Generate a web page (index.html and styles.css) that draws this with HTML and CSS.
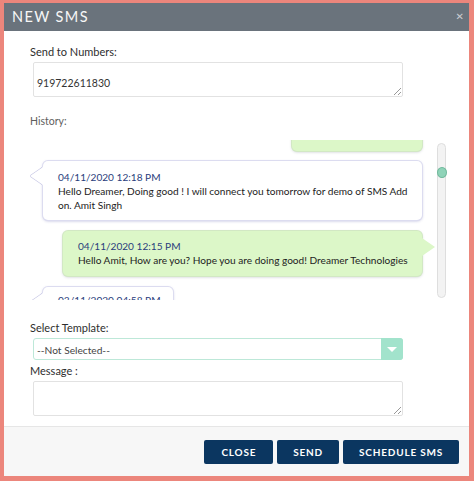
FILE: index.html
```html
<!DOCTYPE html>
<html>
<head>
<meta charset="utf-8">
<link rel="stylesheet" href="styles.css">
</head>
<body>
<div class="dialog">
  <div class="header">
    <span class="title">NEW SMS</span>
    <span class="close-x">&#x2715;</span>
  </div>
  <div class="body">
    <div class="label">Send to Numbers:</div>
    <div class="textarea numbers">919722611830<span class="grip"></span></div>
    <div class="label small">History:</div>
    <div class="history">
      <div class="messages">
        <div class="bubble sent partial-top"></div>
        <div class="bubble recv">
          <div class="ts">04/11/2020 12:18 PM</div>
          <div>Hello Dreamer, Doing good ! I will connect you tomorrow for demo of SMS Add on. Amit Singh</div>
        </div>
        <div class="bubble sent">
          <div class="ts">04/11/2020 12:15 PM</div>
          <div>Hello Amit, How are you? Hope you are doing good! Dreamer Technologies</div>
        </div>
        <div class="bubble recv short">
          <div class="ts">03/11/2020 04:58 PM</div>
        </div>
      </div>
      <div class="scrollbar"><div class="thumb"></div></div>
    </div>
    <div class="label tpl">Select Template:</div>
    <div class="select">
      <span class="select-text">--Not Selected--</span>
      <span class="select-btn"><span class="tri"></span></span>
    </div>
    <div class="label msg">Message :</div>
    <div class="textarea message"><span class="grip"></span></div>
  </div>
  <div class="footer">
    <button class="btn btn-close">CLOSE</button>
    <button class="btn">SEND</button>
    <button class="btn">SCHEDULE SMS</button>
  </div>
</div>
</body>
</html>
```

FILE: styles.css
```css
html, body {
  margin: 0;
  padding: 0;
}
body {
  background: #ec867c;
  width: 474px;
  height: 481px;
  overflow: hidden;
  font-family: Lato, "Open Sans", sans-serif;
  color: #333;
}
.dialog {
  margin: 3px 0 0 4px;
  width: 465px;
  height: 473px;
  background: #fff;
  display: flex;
  flex-direction: column;
}
.header {
  height: 28px;
  background: #6a737c;
  display: flex;
  align-items: center;
  justify-content: space-between;
  padding: 0 5px 0 8px;
}
.title {
  color: #f7f7f7;
  font-size: 14.5px;
  letter-spacing: 1.4px;
  line-height: 28px;
}
.close-x {
  color: #c9cdd1;
  font-size: 10px;
  font-family: "DejaVu Sans", sans-serif;
  margin-top: -2px;
}
.body {
  flex: 1;
  padding: 13px 0 0 26px;
  display: flex;
  flex-direction: column;
}
.label {
  font-size: 11px;
  line-height: 16px;
  color: #2e2e2e;
}
.label.small {
  font-size: 10.5px;
  line-height: 14px;
  color: #5e5e5e;
  margin-top: 17px;
}
.textarea {
  position: relative;
  box-sizing: border-box;
  margin: 2px 0 0 3px;
  width: 370px;
  height: 35px;
  border: 1px solid #e2e2e2;
  border-radius: 2px;
  font-size: 10.5px;
  line-height: 16px;
  color: #333;
}
.numbers {
  padding: 12px 0 0 3px;
}
.grip {
  position: absolute;
  right: 1px;
  bottom: 1px;
  width: 7px;
  height: 7px;
  background: linear-gradient(135deg, transparent 45%, #999 45%, #999 55%, transparent 55%, transparent 75%, #999 75%, #999 85%, transparent 85%);
}
.history {
  margin-top: 12px;
  height: 160px;
  display: flex;
}
.messages {
  width: 407px;
  height: 160px;
  overflow: hidden;
  display: flex;
  flex-direction: column;
  align-items: flex-start;
}
.bubble {
  position: relative;
  box-sizing: border-box;
  font-size: 10.1px;
  line-height: 14px;
  color: #222;
  border-radius: 5px;
  flex: none;
}
.bubble::before {
  content: "";
  position: absolute;
  top: 6px;
  width: 0;
  height: 0;
  border-top: 9px solid transparent;
  border-bottom: 9px solid transparent;
}
.ts {
  color: #2a3d7c;
  white-space: nowrap;
}
.recv {
  background: #fff;
  margin-left: 13px;
  width: 379px;
  margin-top: 10px;
  padding: 9px 14px 8px 15px;
  box-shadow: 0 0 0 1px #dcdcf0, 0 1px 3px rgba(90, 90, 170, 0.45);
}
.recv::before {
  left: -13px;
  border-right: 13px solid #fff;
  filter: drop-shadow(-1px 0 0.5px rgba(120, 120, 190, 0.45));
}
.sent {
  background: #dcf7c8;
  margin-left: 33px;
  width: 359px;
  margin-top: 11px;
  padding: 8px 14px 9px 15px;
  box-shadow: 0 0 0 1px #d2e8c4, 0 1px 3px rgba(120, 130, 140, 0.45);
}
.sent::before {
  right: -13px;
  top: 7px;
  border-left: 13px solid #dcf7c8;
}
.partial-top {
  width: 130px;
  height: 45px;
  margin-left: 262px;
  margin-top: -34px;
}
.partial-top::before {
  display: none;
}
.recv.short {
  width: 130px;
  margin-top: 11px;
  height: 45px;
  padding-top: 6px;
}
.scrollbar {
  position: relative;
  box-sizing: border-box;
  margin-top: 3px;
  width: 9px;
  height: 155px;
  background: #f3f3f3;
  border: 1px solid #dedede;
  border-radius: 5px;
}
.thumb {
  position: absolute;
  left: -1px;
  top: 23px;
  box-sizing: border-box;
  width: 10px;
  height: 11px;
  border-radius: 50%;
  background: #8fd3b8;
  border: 1px solid #70b99c;
}
.label.tpl {
  margin-top: 20px;
}
.select {
  box-sizing: border-box;
  margin: 2px 0 0 3px;
  width: 370px;
  height: 22px;
  border: 1px solid #bde8d8;
  border-radius: 3px;
  display: flex;
  align-items: center;
  justify-content: space-between;
}
.select-text {
  font-size: 10.2px;
  color: #444;
  padding: 2px 0 0 3px;
}
.select-btn {
  width: 22px;
  height: 22px;
  margin: -1px -1px -1px 0;
  background: #a2e3cc;
  border-radius: 0 3px 3px 0;
  display: flex;
  align-items: center;
  justify-content: center;
}
.tri {
  width: 0;
  height: 0;
  border-left: 5px solid transparent;
  border-right: 5px solid transparent;
  border-top: 5px solid #fff;
}
.label.msg {
  margin-top: 3px;
}
.footer {
  height: 49px;
  border-top: 1px solid #e6e6e6;
  background: #f7f7f7;
  display: flex;
  justify-content: flex-end;
  align-items: center;
  gap: 4px;
  padding-right: 10px;
}
.btn {
  height: 24px;
  background: #0b3660;
  color: #fff;
  border: none;
  border-radius: 2px;
  font-family: Lato, sans-serif;
  font-weight: bold;
  font-size: 10px;
  letter-spacing: 0.8px;
  padding: 0 16px;
}
.btn-close {
  padding: 0 17px;
}
```
